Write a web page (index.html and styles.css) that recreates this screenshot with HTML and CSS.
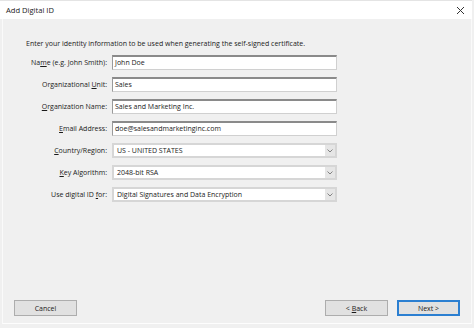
FILE: index.html
```html
<!DOCTYPE html>
<html>
<head>
<meta charset="utf-8">
<link rel="stylesheet" href="styles.css">
</head>
<body>
<div class="window">
  <div class="titlebar">
    <span class="title">Add Digital ID</span>
    <svg class="close" width="9" height="9" viewBox="0 0 9 9"><path d="M1 1L8 8M8 1L1 8" stroke="#333" stroke-width="1"/></svg>
  </div>
  <div class="content">
    <p class="intro">Enter your identity information to be used when generating the self-signed certificate.</p>
    <div class="form">
      <label class="lbl">Na<u>m</u>e (e.g. John Smith):</label>
      <div class="edit">John Doe</div>
      <label class="lbl">Organizational <u>U</u>nit:</label>
      <div class="edit">Sales</div>
      <label class="lbl"><u>O</u>rganization Name:</label>
      <div class="edit">Sales and Marketing Inc.</div>
      <label class="lbl"><u>E</u>mail Address:</label>
      <div class="edit">doe@salesandmarketinginc.com</div>
      <label class="lbl"><u>C</u>ountry/Region:</label>
      <div class="combo"><span class="val">US - UNITED STATES</span><span class="drop"><svg width="6" height="4" viewBox="0 0 6 4"><path d="M0.5 0.5L3 3L5.5 0.5" stroke="#777" fill="none" stroke-width="0.9"/></svg></span></div>
      <label class="lbl"><u>K</u>ey Algorithm:</label>
      <div class="combo"><span class="val">2048-bit RSA</span><span class="drop"><svg width="6" height="4" viewBox="0 0 6 4"><path d="M0.5 0.5L3 3L5.5 0.5" stroke="#777" fill="none" stroke-width="0.9"/></svg></span></div>
      <label class="lbl">Use digital ID <u>f</u>or:</label>
      <div class="combo"><span class="val">Digital Signatures and Data Encryption</span><span class="drop"><svg width="6" height="4" viewBox="0 0 6 4"><path d="M0.5 0.5L3 3L5.5 0.5" stroke="#777" fill="none" stroke-width="0.9"/></svg></span></div>
    </div>
  </div>
  <div class="footer">
    <button class="btn">Cancel</button>
    <div class="right">
      <button class="btn">&lt; <u>B</u>ack</button>
      <button class="btn primary">Next &gt;</button>
    </div>
  </div>
</div>
</body>
</html>
```

FILE: styles.css
```css
html, body {
  margin: 0;
  padding: 0;
  background: #f0f0f0;
}
body {
  width: 474px;
  height: 328px;
  overflow: hidden;
  font-family: "Open Sans", "Noto Sans", sans-serif;
  font-size: 7px;
  color: #1a1a1a;
}
.window {
  width: 470px;
  height: 324px;
  margin-left: 2px;
  border-right: 1px solid #fafafa;
  border-left: 1px solid #fafafa;
  border-bottom: 1px solid #fdfdfd;
  display: flex;
  flex-direction: column;
  box-sizing: border-box;
}
.titlebar {
  height: 19px;
  margin-left: -3px;
  margin-right: -1px;
  background: #ffffff;
  border-top: 1px solid #e4e4e4;
  box-sizing: border-box;
  display: flex;
  align-items: center;
  justify-content: space-between;
  padding: 0 6px 0 6px;
}
.title {
  font-size: 7.6px;
  color: #222;
}
.close {
  margin-right: 1px;
  display: block;
}
.content {
  flex: 1;
  padding: 18px 0 0 23px;
}
.intro {
  margin: 0 0 5px 0;
  line-height: 13px;
}
.form {
  display: grid;
  grid-template-columns: 81px 225px;
  column-gap: 5px;
  row-gap: 7px;
  align-items: center;
}
.lbl {
  text-align: right;
  white-space: nowrap;
}
.edit {
  height: 15px;
  box-sizing: border-box;
  background: #fff;
  border: 1px solid #d0d0d0;
  border-top: 2px solid #8a8a8a;
  border-left-color: #9a9a9a;
  padding: 0 2px;
  line-height: 12px;
  white-space: nowrap;
}
.combo {
  height: 15px;
  box-sizing: border-box;
  background: #fff;
  border: 2px solid #d6d6d6;
  display: flex;
  align-items: center;
}
.combo .val {
  flex: 1;
  padding-left: 3px;
  white-space: nowrap;
}
.drop {
  width: 10px;
  height: 11px;
  background: #e6e6e6;
  display: flex;
  align-items: center;
  justify-content: center;
}
.footer {
  height: 23px;
  display: flex;
  justify-content: space-between;
  align-items: flex-start;
  padding: 0 11px 0 11px;
}
.right {
  display: flex;
  gap: 9px;
}
.btn {
  width: 63px;
  height: 16px;
  box-sizing: border-box;
  background: #e1e1e1;
  border: 1px solid #adadad;
  font-family: "Open Sans", "Noto Sans", sans-serif;
  font-size: 7px;
  color: #1a1a1a;
  padding: 0;
  margin: 0;
}
.btn.primary {
  border: 2px solid #2b7fd1;
}
```
